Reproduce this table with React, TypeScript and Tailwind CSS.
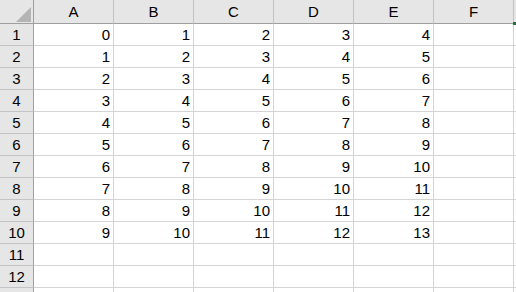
import React from 'react';

const cols = ['A', 'B', 'C', 'D', 'E', 'F'];
const rows = Array.from({ length: 13 }, (_, i) => i + 1);

function value(r: number, c: number): string {
  if (r > 10 || c > 4) return '';
  return String(r - 1 + c);
}

export default function App() {
  return (
    <div className="w-[516px] h-[292px] overflow-hidden bg-white text-[15px] text-black" style={{ fontFamily: '"Liberation Sans", Arial, sans-serif' }}>
      <div className="flex h-[24px] bg-[#e6e6e6]">
        <div className="relative w-[34px] shrink-0 border-r border-b border-[#9f9f9f]">
          <svg className="absolute left-[16px] top-[7px]" width="15" height="15" viewBox="0 0 15 15">
            <polygon points="15,0 15,15 0,15" fill="#b4b4b4" />
          </svg>
        </div>
        {cols.map((c) => (
          <div key={c} className="w-[80px] shrink-0 flex items-center justify-center border-r border-r-[#c4c4c4] border-b border-b-[#9f9f9f] leading-none">
            {c}
          </div>
        ))}
        <div className="relative flex-1 border-b border-[#9f9f9f]">
          <div className="absolute left-[-1px] bottom-[-2px] w-[3px] h-[3px] bg-[#217346]" />
        </div>
      </div>
      {rows.map((r) => (
        <div key={r} className="flex h-[22px]">
          <div className="w-[34px] shrink-0 flex items-center justify-center bg-[#e6e6e6] border-r border-r-[#9f9f9f] border-b border-b-[#c4c4c4] leading-none">
            {r <= 12 ? r : ''}
          </div>
          {cols.map((c, ci) => (
            <div key={c} className="w-[80px] shrink-0 flex items-center justify-end pr-[3px] border-r border-b border-[#d4d4d4] leading-none">
              {value(r, ci)}
            </div>
          ))}
          <div className="flex-1 border-b border-[#d4d4d4]" />
        </div>
      ))}
    </div>
  );
}
